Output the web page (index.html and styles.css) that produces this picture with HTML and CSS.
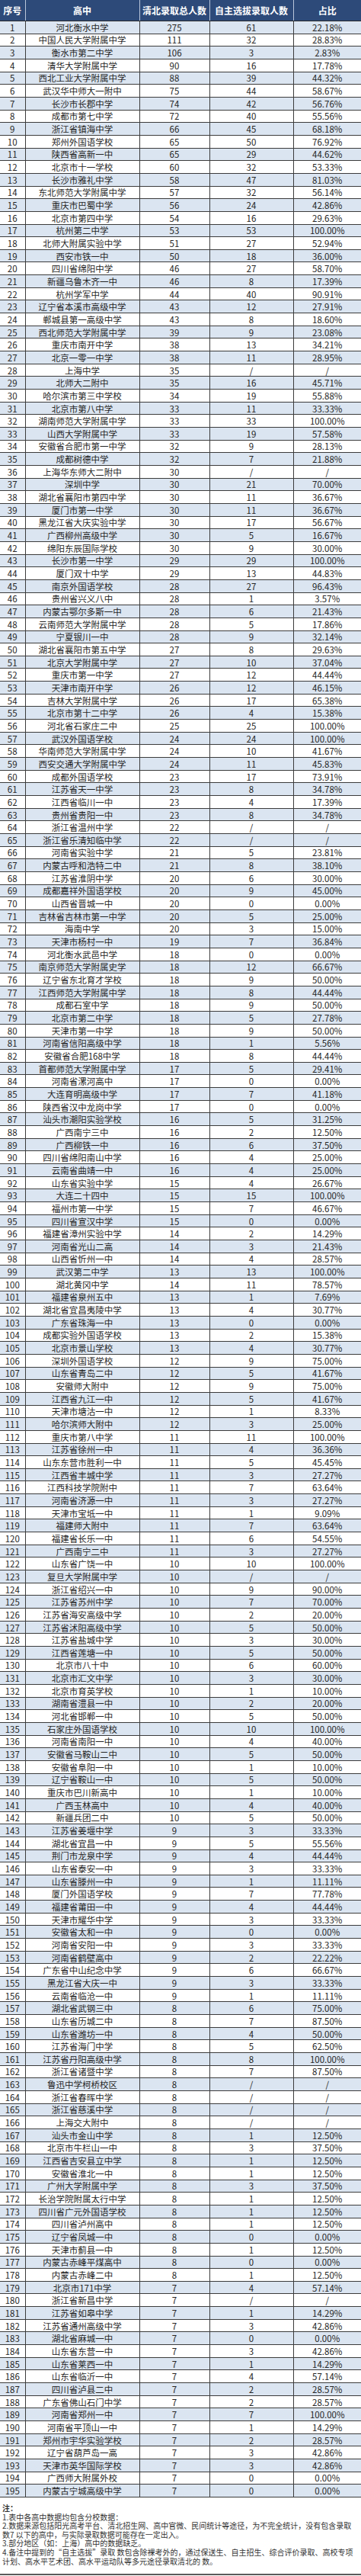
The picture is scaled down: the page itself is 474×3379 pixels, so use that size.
FILE: index.html
```html
<!DOCTYPE html>
<html lang="zh-CN">
<head>
<meta charset="utf-8">
<title>清北录取人数高中排行</title>
<link rel="stylesheet" href="styles.css">
</head>
<body>
<div class="page">
<table class="rank">
<colgroup><col class="c-no"><col class="c-name"><col class="c-total"><col class="c-self"><col class="c-pct"></colgroup>
<thead>
<tr><th>序号</th><th>高中</th><th>清北录取总人数</th><th>自主选拔录取人数</th><th>占比</th></tr>
</thead>
<tbody>
<tr><td>1</td><td>河北衡水中学</td><td>275</td><td>61</td><td>22.18%</td></tr>
<tr><td>2</td><td>中国人民大学附属中学</td><td>111</td><td>32</td><td>28.83%</td></tr>
<tr><td>3</td><td>衡水市第二中学</td><td>106</td><td>3</td><td>2.83%</td></tr>
<tr><td>4</td><td>清华大学附属中学</td><td>90</td><td>16</td><td>17.78%</td></tr>
<tr><td>5</td><td>西北工业大学附属中学</td><td>88</td><td>39</td><td>44.32%</td></tr>
<tr><td>6</td><td>武汉华中师大一附中</td><td>75</td><td>44</td><td>58.67%</td></tr>
<tr><td>7</td><td>长沙市长郡中学</td><td>74</td><td>42</td><td>56.76%</td></tr>
<tr><td>8</td><td>成都市第七中学</td><td>72</td><td>40</td><td>55.56%</td></tr>
<tr><td>9</td><td>浙江省镇海中学</td><td>66</td><td>45</td><td>68.18%</td></tr>
<tr><td>10</td><td>郑州外国语学校</td><td>65</td><td>50</td><td>76.92%</td></tr>
<tr><td>11</td><td>陕西省高新一中</td><td>65</td><td>29</td><td>44.62%</td></tr>
<tr><td>12</td><td>北京市十一学校</td><td>60</td><td>32</td><td>53.33%</td></tr>
<tr><td>13</td><td>长沙市雅礼中学</td><td>58</td><td>47</td><td>81.03%</td></tr>
<tr><td>14</td><td>东北师范大学附属中学</td><td>57</td><td>32</td><td>56.14%</td></tr>
<tr><td>15</td><td>重庆市巴蜀中学</td><td>56</td><td>24</td><td>42.86%</td></tr>
<tr><td>16</td><td>北京市第四中学</td><td>54</td><td>16</td><td>29.63%</td></tr>
<tr><td>17</td><td>杭州第二中学</td><td>53</td><td>53</td><td>100.00%</td></tr>
<tr><td>18</td><td>北师大附属实验中学</td><td>51</td><td>27</td><td>52.94%</td></tr>
<tr><td>19</td><td>西安市铁一中</td><td>50</td><td>18</td><td>36.00%</td></tr>
<tr><td>20</td><td>四川省绵阳中学</td><td>46</td><td>27</td><td>58.70%</td></tr>
<tr><td>21</td><td>新疆乌鲁木齐一中</td><td>46</td><td>8</td><td>17.39%</td></tr>
<tr><td>22</td><td>杭州学军中学</td><td>44</td><td>40</td><td>90.91%</td></tr>
<tr><td>23</td><td>辽宁省本溪市高级中学</td><td>43</td><td>12</td><td>27.91%</td></tr>
<tr><td>24</td><td>郸城县第一高级中学</td><td>43</td><td>8</td><td>18.60%</td></tr>
<tr><td>25</td><td>西北师范大学附属中学</td><td>39</td><td>9</td><td>23.08%</td></tr>
<tr><td>26</td><td>重庆市南开中学</td><td>38</td><td>13</td><td>34.21%</td></tr>
<tr><td>27</td><td>北京一零一中学</td><td>38</td><td>11</td><td>28.95%</td></tr>
<tr><td>28</td><td>上海中学</td><td>35</td><td>/</td><td>/</td></tr>
<tr><td>29</td><td>北师大二附中</td><td>35</td><td>16</td><td>45.71%</td></tr>
<tr><td>30</td><td>哈尔滨市第三中学校</td><td>34</td><td>19</td><td>55.88%</td></tr>
<tr><td>31</td><td>北京市第八中学</td><td>33</td><td>11</td><td>33.33%</td></tr>
<tr><td>32</td><td>湖南师范大学附属中学</td><td>33</td><td>33</td><td>100.00%</td></tr>
<tr><td>33</td><td>山西大学附属中学</td><td>33</td><td>19</td><td>57.58%</td></tr>
<tr><td>34</td><td>安徽省合肥市第一中学</td><td>32</td><td>9</td><td>28.13%</td></tr>
<tr><td>35</td><td>成都树德中学</td><td>32</td><td>7</td><td>21.88%</td></tr>
<tr><td>36</td><td>上海华东师大二附中</td><td>30</td><td>/</td><td>/</td></tr>
<tr><td>37</td><td>深圳中学</td><td>30</td><td>21</td><td>70.00%</td></tr>
<tr><td>38</td><td>湖北省襄阳市第四中学</td><td>30</td><td>11</td><td>36.67%</td></tr>
<tr><td>39</td><td>厦门市第一中学</td><td>30</td><td>11</td><td>36.67%</td></tr>
<tr><td>40</td><td>黑龙江省大庆实验中学</td><td>30</td><td>17</td><td>56.67%</td></tr>
<tr><td>41</td><td>广西柳州高级中学</td><td>30</td><td>5</td><td>16.67%</td></tr>
<tr><td>42</td><td>绵阳东辰国际学校</td><td>30</td><td>9</td><td>30.00%</td></tr>
<tr><td>43</td><td>长沙市第一中学</td><td>29</td><td>29</td><td>100.00%</td></tr>
<tr><td>44</td><td>厦门双十中学</td><td>29</td><td>13</td><td>44.83%</td></tr>
<tr><td>45</td><td>南京外国语学校</td><td>28</td><td>27</td><td>96.43%</td></tr>
<tr><td>46</td><td>贵州省兴义八中</td><td>28</td><td>1</td><td>3.57%</td></tr>
<tr><td>47</td><td>内蒙古鄂尔多斯一中</td><td>28</td><td>6</td><td>21.43%</td></tr>
<tr><td>48</td><td>云南师范大学附属中学</td><td>28</td><td>5</td><td>17.86%</td></tr>
<tr><td>49</td><td>宁夏银川一中</td><td>28</td><td>9</td><td>32.14%</td></tr>
<tr><td>50</td><td>湖北省襄阳市第五中学</td><td>27</td><td>8</td><td>29.63%</td></tr>
<tr><td>51</td><td>北京大学附属中学</td><td>27</td><td>10</td><td>37.04%</td></tr>
<tr><td>52</td><td>重庆市第一中学</td><td>27</td><td>12</td><td>44.44%</td></tr>
<tr><td>53</td><td>天津市南开中学</td><td>26</td><td>12</td><td>46.15%</td></tr>
<tr><td>54</td><td>吉林大学附属中学</td><td>26</td><td>17</td><td>65.38%</td></tr>
<tr><td>55</td><td>北京市第十二中学</td><td>26</td><td>4</td><td>15.38%</td></tr>
<tr><td>56</td><td>河北省石家庄二中</td><td>25</td><td>25</td><td>100.00%</td></tr>
<tr><td>57</td><td>武汉外国语学校</td><td>24</td><td>24</td><td>100.00%</td></tr>
<tr><td>58</td><td>华南师范大学附属中学</td><td>24</td><td>10</td><td>41.67%</td></tr>
<tr><td>59</td><td>西安交通大学附属中学</td><td>24</td><td>11</td><td>45.83%</td></tr>
<tr><td>60</td><td>成都外国语学校</td><td>23</td><td>17</td><td>73.91%</td></tr>
<tr><td>61</td><td>江苏省天一中学</td><td>23</td><td>8</td><td>34.78%</td></tr>
<tr><td>62</td><td>江西省临川一中</td><td>23</td><td>4</td><td>17.39%</td></tr>
<tr><td>63</td><td>贵州省贵阳一中</td><td>23</td><td>8</td><td>34.78%</td></tr>
<tr><td>64</td><td>浙江省温州中学</td><td>22</td><td>/</td><td>/</td></tr>
<tr><td>65</td><td>浙江省乐清知临中学</td><td>22</td><td>/</td><td>/</td></tr>
<tr><td>66</td><td>河南省实验中学</td><td>21</td><td>5</td><td>23.81%</td></tr>
<tr><td>67</td><td>内蒙古呼和浩特二中</td><td>21</td><td>8</td><td>38.10%</td></tr>
<tr><td>68</td><td>江苏省淮阴中学</td><td>20</td><td>6</td><td>30.00%</td></tr>
<tr><td>69</td><td>成都嘉祥外国语学校</td><td>20</td><td>9</td><td>45.00%</td></tr>
<tr><td>70</td><td>山西省晋城一中</td><td>20</td><td>0</td><td>0.00%</td></tr>
<tr><td>71</td><td>吉林省吉林市第一中学</td><td>20</td><td>5</td><td>25.00%</td></tr>
<tr><td>72</td><td>海南中学</td><td>20</td><td>3</td><td>15.00%</td></tr>
<tr><td>73</td><td>天津市杨村一中</td><td>19</td><td>7</td><td>36.84%</td></tr>
<tr><td>74</td><td>河北衡水武邑中学</td><td>18</td><td>0</td><td>0.00%</td></tr>
<tr><td>75</td><td>南京师范大学附属史学</td><td>18</td><td>12</td><td>66.67%</td></tr>
<tr><td>76</td><td>辽宁省东北育才学校</td><td>18</td><td>9</td><td>50.00%</td></tr>
<tr><td>77</td><td>江西师范大学附属中学</td><td>18</td><td>8</td><td>44.44%</td></tr>
<tr><td>78</td><td>成都石室中学</td><td>18</td><td>9</td><td>50.00%</td></tr>
<tr><td>79</td><td>北京市第二中学</td><td>18</td><td>5</td><td>27.78%</td></tr>
<tr><td>80</td><td>天津市第一中学</td><td>18</td><td>9</td><td>50.00%</td></tr>
<tr><td>81</td><td>河南省信阳高级中学</td><td>18</td><td>1</td><td>5.56%</td></tr>
<tr><td>82</td><td>安徽省合肥168中学</td><td>18</td><td>8</td><td>44.44%</td></tr>
<tr><td>83</td><td>首都师范大学附属中学</td><td>17</td><td>5</td><td>29.41%</td></tr>
<tr><td>84</td><td>河南省漯河高中</td><td>17</td><td>0</td><td>0.00%</td></tr>
<tr><td>85</td><td>大连育明高级中学</td><td>17</td><td>7</td><td>41.18%</td></tr>
<tr><td>86</td><td>陕西省汉中龙岗中学</td><td>17</td><td>0</td><td>0.00%</td></tr>
<tr><td>87</td><td>汕头市潮阳实验学校</td><td>16</td><td>5</td><td>31.25%</td></tr>
<tr><td>88</td><td>广西南宁三中</td><td>16</td><td>2</td><td>12.50%</td></tr>
<tr><td>89</td><td>广西柳铁一中</td><td>16</td><td>6</td><td>37.50%</td></tr>
<tr><td>90</td><td>四川省绵阳南山中学</td><td>16</td><td>4</td><td>25.00%</td></tr>
<tr><td>91</td><td>云南省曲靖一中</td><td>16</td><td>4</td><td>25.00%</td></tr>
<tr><td>92</td><td>山东省实验中学</td><td>15</td><td>4</td><td>26.67%</td></tr>
<tr><td>93</td><td>大连二十四中</td><td>15</td><td>15</td><td>100.00%</td></tr>
<tr><td>94</td><td>福州市第一中学</td><td>15</td><td>7</td><td>46.67%</td></tr>
<tr><td>95</td><td>四川省宣汉中学</td><td>15</td><td>0</td><td>0.00%</td></tr>
<tr><td>96</td><td>福建省漳州实验中学</td><td>14</td><td>2</td><td>14.29%</td></tr>
<tr><td>97</td><td>河南省光山二高</td><td>14</td><td>3</td><td>21.43%</td></tr>
<tr><td>98</td><td>山西省忻州一中</td><td>14</td><td>4</td><td>28.57%</td></tr>
<tr><td>99</td><td>武汉第二中学</td><td>13</td><td>13</td><td>100.00%</td></tr>
<tr><td>100</td><td>湖北黄冈中学</td><td>14</td><td>11</td><td>78.57%</td></tr>
<tr><td>101</td><td>福建省泉州五中</td><td>13</td><td>1</td><td>7.69%</td></tr>
<tr><td>102</td><td>湖北省宜昌夷陵中学</td><td>13</td><td>4</td><td>30.77%</td></tr>
<tr><td>103</td><td>广东省珠海一中</td><td>13</td><td>0</td><td>0.00%</td></tr>
<tr><td>104</td><td>成都实验外国语学校</td><td>13</td><td>2</td><td>15.38%</td></tr>
<tr><td>105</td><td>北京市景山学校</td><td>13</td><td>4</td><td>30.77%</td></tr>
<tr><td>106</td><td>深圳外国语学校</td><td>12</td><td>9</td><td>75.00%</td></tr>
<tr><td>107</td><td>山东省青岛二中</td><td>12</td><td>5</td><td>41.67%</td></tr>
<tr><td>108</td><td>安徽师大附中</td><td>12</td><td>9</td><td>75.00%</td></tr>
<tr><td>109</td><td>江西省九江一中</td><td>12</td><td>5</td><td>41.67%</td></tr>
<tr><td>110</td><td>天津市塘沽一中</td><td>12</td><td>1</td><td>8.33%</td></tr>
<tr><td>111</td><td>哈尔滨师大附中</td><td>12</td><td>3</td><td>25.00%</td></tr>
<tr><td>112</td><td>重庆市第八中学</td><td>11</td><td>11</td><td>100.00%</td></tr>
<tr><td>113</td><td>江苏省徐州一中</td><td>11</td><td>4</td><td>36.36%</td></tr>
<tr><td>114</td><td>山东东营市胜利一中</td><td>11</td><td>5</td><td>45.45%</td></tr>
<tr><td>115</td><td>江西省丰城中学</td><td>11</td><td>3</td><td>27.27%</td></tr>
<tr><td>116</td><td>江西科技学院附中</td><td>11</td><td>7</td><td>63.64%</td></tr>
<tr><td>117</td><td>河南省济源一中</td><td>11</td><td>3</td><td>27.27%</td></tr>
<tr><td>118</td><td>天津市宝坻一中</td><td>11</td><td>1</td><td>9.09%</td></tr>
<tr><td>119</td><td>福建师大附中</td><td>11</td><td>7</td><td>63.64%</td></tr>
<tr><td>120</td><td>福建省长乐一中</td><td>11</td><td>6</td><td>54.55%</td></tr>
<tr><td>121</td><td>广西南宁二中</td><td>11</td><td>3</td><td>27.27%</td></tr>
<tr><td>122</td><td>山东省广饶一中</td><td>10</td><td>10</td><td>100.00%</td></tr>
<tr><td>123</td><td>复旦大学附属中学</td><td>10</td><td>/</td><td>/</td></tr>
<tr><td>124</td><td>浙江省绍兴一中</td><td>10</td><td>9</td><td>90.00%</td></tr>
<tr><td>125</td><td>江苏省苏州中学</td><td>10</td><td>7</td><td>70.00%</td></tr>
<tr><td>126</td><td>江苏省海安高级中学</td><td>10</td><td>2</td><td>20.00%</td></tr>
<tr><td>127</td><td>江苏省沭阳高级中学</td><td>10</td><td>5</td><td>50.00%</td></tr>
<tr><td>128</td><td>江苏省盐城中学</td><td>10</td><td>3</td><td>30.00%</td></tr>
<tr><td>129</td><td>江西省莲塘一中</td><td>10</td><td>5</td><td>50.00%</td></tr>
<tr><td>130</td><td>北京市八十中</td><td>10</td><td>6</td><td>60.00%</td></tr>
<tr><td>131</td><td>北京市汇文中学</td><td>10</td><td>3</td><td>30.00%</td></tr>
<tr><td>132</td><td>北京市育英学校</td><td>10</td><td>1</td><td>10.00%</td></tr>
<tr><td>133</td><td>湖南省澧县一中</td><td>10</td><td>2</td><td>20.00%</td></tr>
<tr><td>134</td><td>河北省邯郸一中</td><td>10</td><td>5</td><td>50.00%</td></tr>
<tr><td>135</td><td>石家庄外国语学校</td><td>10</td><td>10</td><td>100.00%</td></tr>
<tr><td>136</td><td>河南省南阳一中</td><td>10</td><td>4</td><td>40.00%</td></tr>
<tr><td>137</td><td>安徽省马鞍山二中</td><td>10</td><td>5</td><td>50.00%</td></tr>
<tr><td>138</td><td>安徽省阜阳一中</td><td>10</td><td>1</td><td>10.00%</td></tr>
<tr><td>139</td><td>辽宁省鞍山一中</td><td>10</td><td>5</td><td>50.00%</td></tr>
<tr><td>140</td><td>重庆市巴川新高中</td><td>10</td><td>1</td><td>10.00%</td></tr>
<tr><td>141</td><td>广西玉林高中</td><td>10</td><td>4</td><td>40.00%</td></tr>
<tr><td>142</td><td>新疆兵团二中</td><td>10</td><td>5</td><td>50.00%</td></tr>
<tr><td>143</td><td>江苏省姜堰中学</td><td>9</td><td>3</td><td>33.33%</td></tr>
<tr><td>144</td><td>湖北省宜昌一中</td><td>9</td><td>5</td><td>55.56%</td></tr>
<tr><td>145</td><td>荆门市龙泉中学</td><td>9</td><td>4</td><td>44.44%</td></tr>
<tr><td>146</td><td>山东省泰安一中</td><td>9</td><td>3</td><td>33.33%</td></tr>
<tr><td>147</td><td>山东省滕州一中</td><td>9</td><td>1</td><td>11.11%</td></tr>
<tr><td>148</td><td>厦门外国语学校</td><td>9</td><td>7</td><td>77.78%</td></tr>
<tr><td>149</td><td>福建省莆田一中</td><td>9</td><td>4</td><td>44.44%</td></tr>
<tr><td>150</td><td>天津市耀华中学</td><td>9</td><td>3</td><td>33.33%</td></tr>
<tr><td>151</td><td>安徽省太和一中</td><td>9</td><td>0</td><td>0.00%</td></tr>
<tr><td>152</td><td>河南省安阳一中</td><td>9</td><td>3</td><td>33.33%</td></tr>
<tr><td>153</td><td>河南省鹤壁高中</td><td>9</td><td>2</td><td>22.22%</td></tr>
<tr><td>154</td><td>广东省中山纪念中学</td><td>9</td><td>6</td><td>66.67%</td></tr>
<tr><td>155</td><td>黑龙江省大庆一中</td><td>9</td><td>3</td><td>33.33%</td></tr>
<tr><td>156</td><td>云南省临沧一中</td><td>9</td><td>1</td><td>11.11%</td></tr>
<tr><td>157</td><td>湖北省武钢三中</td><td>8</td><td>6</td><td>75.00%</td></tr>
<tr><td>158</td><td>山东省历城二中</td><td>8</td><td>7</td><td>87.50%</td></tr>
<tr><td>159</td><td>山东省潍坊一中</td><td>8</td><td>4</td><td>50.00%</td></tr>
<tr><td>160</td><td>江苏省海门中学</td><td>8</td><td>5</td><td>62.50%</td></tr>
<tr><td>161</td><td>江苏省丹阳高级中学</td><td>8</td><td>8</td><td>100.00%</td></tr>
<tr><td>162</td><td>浙江省诸暨中学</td><td>8</td><td>7</td><td>87.50%</td></tr>
<tr><td>163</td><td>鲁迅中学柯桥校区</td><td>8</td><td>/</td><td>/</td></tr>
<tr><td>164</td><td>浙江省春晖中学</td><td>8</td><td>/</td><td>/</td></tr>
<tr><td>165</td><td>浙江省慈溪中学</td><td>8</td><td>/</td><td>/</td></tr>
<tr><td>166</td><td>上海交大附中</td><td>8</td><td>/</td><td>/</td></tr>
<tr><td>167</td><td>汕头市金山中学</td><td>8</td><td>1</td><td>12.50%</td></tr>
<tr><td>168</td><td>北京市牛栏山一中</td><td>8</td><td>3</td><td>37.50%</td></tr>
<tr><td>169</td><td>江西省吉安县立中学</td><td>8</td><td>1</td><td>12.50%</td></tr>
<tr><td>170</td><td>安徽省淮北一中</td><td>8</td><td>1</td><td>12.50%</td></tr>
<tr><td>171</td><td>广州大学附属中学</td><td>8</td><td>3</td><td>37.50%</td></tr>
<tr><td>172</td><td>长治学院附属太行中学</td><td>8</td><td>1</td><td>12.50%</td></tr>
<tr><td>173</td><td>四川省广元外国语学校</td><td>8</td><td>1</td><td>12.50%</td></tr>
<tr><td>174</td><td>四川省泸州高中</td><td>8</td><td>1</td><td>12.50%</td></tr>
<tr><td>175</td><td>辽宁省凤城一中</td><td>8</td><td>0</td><td>0.00%</td></tr>
<tr><td>176</td><td>天津市蓟县一中</td><td>8</td><td>1</td><td>12.50%</td></tr>
<tr><td>177</td><td>内蒙古赤峰平煤高中</td><td>8</td><td>0</td><td>0.00%</td></tr>
<tr><td>178</td><td>内蒙古赤峰二中</td><td>8</td><td>1</td><td>12.50%</td></tr>
<tr><td>179</td><td>北京市171中学</td><td>7</td><td>4</td><td>57.14%</td></tr>
<tr><td>180</td><td>浙江省新昌中学</td><td>7</td><td>/</td><td>/</td></tr>
<tr><td>181</td><td>江苏省如皋中学</td><td>7</td><td>1</td><td>14.29%</td></tr>
<tr><td>182</td><td>江苏省通州高级中学</td><td>7</td><td>3</td><td>42.86%</td></tr>
<tr><td>183</td><td>湖北省麻城一中</td><td>7</td><td>0</td><td>0.00%</td></tr>
<tr><td>184</td><td>山东省东营一中</td><td>7</td><td>3</td><td>42.86%</td></tr>
<tr><td>185</td><td>山东省莱西一中</td><td>7</td><td>1</td><td>14.29%</td></tr>
<tr><td>186</td><td>山东省临沂一中</td><td>7</td><td>4</td><td>57.14%</td></tr>
<tr><td>187</td><td>四川省泸县二中</td><td>7</td><td>2</td><td>28.57%</td></tr>
<tr><td>188</td><td>广东省佛山石门中学</td><td>7</td><td>2</td><td>28.57%</td></tr>
<tr><td>189</td><td>河南省郑州一中</td><td>7</td><td>7</td><td>100.00%</td></tr>
<tr><td>190</td><td>河南省平顶山一中</td><td>7</td><td>1</td><td>14.29%</td></tr>
<tr><td>191</td><td>郑州市宇华实验学校</td><td>7</td><td>2</td><td>28.57%</td></tr>
<tr><td>192</td><td>辽宁省葫芦岛一高</td><td>7</td><td>3</td><td>42.86%</td></tr>
<tr><td>193</td><td>天津市英华国际学校</td><td>7</td><td>3</td><td>42.86%</td></tr>
<tr><td>194</td><td>广西师大附属外校</td><td>7</td><td>0</td><td>0.00%</td></tr>
<tr><td>195</td><td>内蒙古宁城高级中学</td><td>7</td><td>0</td><td>0.00%</td></tr>
</tbody>
</table>
<div class="notes">
<p class="notes-title">注：</p>
<p>1.表中各高中数据均包含分校数据：</p>
<p>2.数据来源包括阳光高考平台、清北招生网、高中官微、民间统计等途径，为不完全统计，没有包含录取数7 以下的高中，与实际录取数据可能存在一定出入。</p>
<p>3.部分地区（如：上海）高中的数据缺乏。</p>
<p>4.备注中提到的“自主选拔”录取 数包含除裸考外的，通过保送生、自主招生、综合评价录取、高校专项计划、高水平艺术团、高水平运动队等多元途径录取清北的 数。</p>
</div>
</div>
</body>
</html>
```

FILE: styles.css
```css
html, body {
  margin: 0;
  padding: 0;
  background: #ffffff;
}

body {
  font-family: "Noto Sans CJK SC", "Noto Sans", sans-serif;
  color: #222222;
}

.page {
  width: 474px;
}

.rank {
  width: 474px;
  border-collapse: collapse;
  table-layout: fixed;
}

.c-no { width: 33px; }
.c-name { width: 150px; }
.c-total { width: 92px; }
.c-self { width: 110px; }
.c-pct { width: 89px; }

.rank th {
  height: 27px;
  padding: 0;
  background: #2d4a79;
  color: #ffffff;
  font-size: 12px;
  font-weight: bold;
  line-height: 14px;
  text-align: center;
  white-space: nowrap;
  border-left: 1px solid #b9c6da;
  border-bottom: 1px solid #2a2a2a;
}

.rank th:first-child {
  border-left: none;
}

.rank tbody tr {
  height: 16.6667px;
}

.rank td {
  padding: 0;
  font-size: 11.5px;
  line-height: 14px;
  text-align: center;
  white-space: nowrap;
  color: #262626;
  border-left: 1px solid #3c3c3c;
  border-bottom: 1px solid #3c3c3c;
}

.rank td:first-child {
  border-left: none;
}

.rank tbody tr:nth-child(odd) td {
  background: #dbe5f1;
}

.notes {
  height: 102px;
  box-sizing: border-box;
  padding: 8px 3px 0 3px;
  font-size: 10px;
  line-height: 11.6px;
  color: #333333;
  border-bottom: 2px solid #5a5a5a;
}

.notes p {
  margin: 0;
}

.notes-title {
  font-weight: bold;
}
```
